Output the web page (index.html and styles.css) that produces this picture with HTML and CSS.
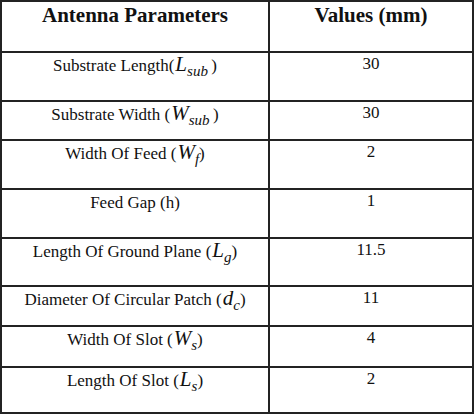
FILE: index.html
```html
<!DOCTYPE html>
<html>
<head>
<meta charset="utf-8">
<link rel="stylesheet" href="styles.css">
</head>
<body>
<div class="table">
  <div class="cell head"><p class="txt">Antenna Parameters</p></div>
  <div class="cell head"><p class="txt">Values (mm)</p></div>

  <div class="cell param"><p class="txt">Substrate Length(<span class="m"><i>L</i><sub>sub</sub></span>&#8201;)</p></div>
  <div class="cell val"><p class="txt">30</p></div>

  <div class="cell param"><p class="txt">Substrate Width (<span class="m"><i>W</i><sub>sub</sub></span>&#8201;)</p></div>
  <div class="cell val"><p class="txt">30</p></div>

  <div class="cell param"><p class="txt">Width Of Feed (<span class="m"><i>W</i><sub>f</sub></span>)</p></div>
  <div class="cell val"><p class="txt">2</p></div>

  <div class="cell param"><p class="txt">Feed Gap (h)</p></div>
  <div class="cell val"><p class="txt">1</p></div>

  <div class="cell param"><p class="txt">Length Of Ground Plane (<span class="m"><i>L</i><sub>g</sub></span>)</p></div>
  <div class="cell val"><p class="txt">11.5</p></div>

  <div class="cell param"><p class="txt">Diameter Of Circular Patch (<span class="m"><i>d</i><sub>c</sub></span>)</p></div>
  <div class="cell val"><p class="txt">11</p></div>

  <div class="cell param"><p class="txt">Width Of Slot (<span class="m"><i>W</i><sub>s</sub></span>)</p></div>
  <div class="cell val"><p class="txt">4</p></div>

  <div class="cell param"><p class="txt">Length Of Slot (<span class="m"><i>L</i><sub>s</sub></span>)</p></div>
  <div class="cell val"><p class="txt">2</p></div>
</div>
</body>
</html>
```

FILE: styles.css
```css
html, body {
  margin: 0;
  padding: 0;
  background: #ffffff;
}

body {
  font-family: Inter, sans-serif;
  font-size: 17px;
  color: #111111;
}

.table {
  display: grid;
  grid-template-columns: 266px 202px;
  grid-template-rows: 49px 47px 37px 47px 47px 46px 38px 39px 44px;
  gap: 2px;
  padding: 2px;
  width: max-content;
  background: #232323;
}

.cell {
  background: #ffffff;
  text-align: center;
}

.txt {
  margin: 0;
}

.head .txt {
  font-family: "Liberation Serif", Inter;
  font-weight: bold;
  font-size: 21px;
  padding-top: 1px;
}

.param .txt {
  font-family: "Liberation Serif", Inter;
  font-weight: 500;
  font-size: 17px;
  padding-top: 3px;
}

.val .txt {
  font-family: "Liberation Serif", Inter;
  font-weight: 500;
  font-size: 17px;
  padding-top: 1px;
}

.m {
  line-height: 0;
  padding-left: 1px;
}

.m i {
  font-style: italic;
  font-size: 21px;
  line-height: 0;
}

.m sub {
  font-style: italic;
  font-size: 15px;
  line-height: 0;
  vertical-align: -5px;
}
```
